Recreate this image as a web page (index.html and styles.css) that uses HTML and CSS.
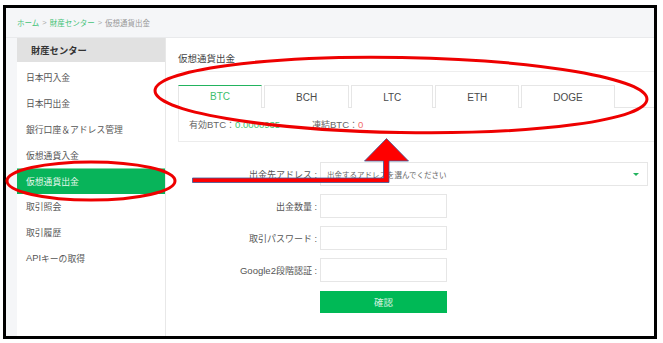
FILE: index.html
```html
<!DOCTYPE html>
<html lang="ja">
<head>
<meta charset="utf-8">
<title>仮想通貨出金</title>
<link rel="stylesheet" href="styles.css">
</head>
<body>
<div class="frame">
  <div class="crumbs">
    <a class="crumb-link">ホーム</a><span class="sep">&gt;</span><a class="crumb-link">財産センター</a><span class="sep">&gt;</span><span class="crumb-cur">仮想通貨出金</span>
  </div>
  <div class="layout">
    <div class="gutter"></div>
    <nav class="sidebar">
      <div class="side-head">財産センター</div>
      <ul class="menu">
        <li class="menu-item">日本円入金</li>
        <li class="menu-item">日本円出金</li>
        <li class="menu-item">銀行口座＆アドレス管理</li>
        <li class="menu-item">仮想通貨入金</li>
        <li class="menu-item active">仮想通貨出金</li>
        <li class="menu-item">取引照会</li>
        <li class="menu-item">取引履歴</li>
        <li class="menu-item"><span class="lat">API</span>キーの取得</li>
      </ul>
    </nav>
    <main class="main">
      <h1 class="title">仮想通貨出金</h1>
      <section class="coinbox">
        <div class="tabs">
          <div class="tab active">BTC</div>
          <div class="tab">BCH</div>
          <div class="tab">LTC</div>
          <div class="tab">ETH</div>
          <div class="tab">DOGE</div>
        </div>
        <div class="balances">
          <span class="bal bal-first">有効<span class="lat">BTC</span>：<span class="green lat">0.0000935</span></span>
          <span class="bal">凍結<span class="lat">BTC</span>：<span class="red lat">0</span></span>
        </div>
      </section>
      <form class="form">
        <label class="lbl">出金先アドレス :</label>
        <div class="select"><span class="ph">出金するアドレスを選んでください</span><span class="caret"></span></div>
        <label class="lbl">出金数量 :</label>
        <div class="input"></div>
        <label class="lbl">取引パスワード :</label>
        <div class="input"></div>
        <label class="lbl"><span class="lat">Google2</span>段階認証 :</label>
        <div class="input"></div>
        <span></span>
        <div class="btn">確認</div>
      </form>
    </main>
  </div>
</div>
<svg class="overlay" width="663" height="343" viewBox="0 0 663 343">
  <ellipse cx="401" cy="95" rx="246" ry="37.5" transform="rotate(1 401 95)" fill="none" stroke="#ee0000" stroke-width="3"/>
  <ellipse cx="91" cy="181" rx="84" ry="19" fill="none" stroke="#ee0000" stroke-width="3"/>
  <path d="M192.5 178 L383.5 178 L383.5 161 L364.5 161 L386.5 138.5 L408.5 161 L389 161 L389 182.5 L192.5 182.5 Z" fill="#ff0000" stroke="#3a5a9a" stroke-width="0.8"/>
</svg>
</body>
</html>
```
FILE: styles.css
```css
* { box-sizing: border-box; }
html, body { margin: 0; padding: 0; background: #fff; }
body {
  font-family: "Liberation Sans", "Noto Sans CJK JP", sans-serif;
  color: #555;
  position: relative;
  width: 663px;
  height: 343px;
  overflow: hidden;
}
.lat { font-size: 1.06em; }
.frame {
  margin: 5px 0 0 3px;
  width: 654px;
  height: 334px;
  border: 3px solid #000;
  background: #f5f6f8;
  overflow: hidden;
  display: flex;
  flex-direction: column;
}
.crumbs {
  height: 30px;
  flex: none;
  display: flex;
  align-items: center;
  padding: 0 0 1px 11px;
  font-size: 7.5px;
  color: #999;
  border-bottom: 1px solid #e9eaec;
}
.crumb-link { color: #45c378; }
.crumb-cur { color: #999; }
.sep { margin: 0 3px; color: #aaa; }
.layout { flex: 1; display: flex; min-height: 0; }
.gutter { width: 11px; flex: none; }
.sidebar {
  width: 149px;
  flex: none;
  background: #fff;
  border-right: 1px solid #e8e8e8;
}
.side-head {
  height: 24px;
  background: #e1e1e1;
  display: flex;
  align-items: center;
  padding-left: 14px;
  font-size: 9.3px;
  font-weight: bold;
  color: #333;
}
.menu { list-style: none; margin: 0; padding: 3px 0 0; }
.menu-item {
  height: 25.75px;
  display: flex;
  align-items: center;
  padding-left: 9px;
  font-size: 8.8px;
  color: #555;
}
.menu-item.active {
  background: #08b45a;
  color: #e6f7ec;
  border-top: 1px solid #7fd9a4;
}
.main {
  flex: 1;
  background: #fff;
  padding: 0 6px 0 12px;
  min-width: 0;
}
.title {
  margin: 0 -10px 0 0;
  padding-top: 8px;
  height: 34px;
  line-height: 25px;
  font-size: 9.5px;
  font-weight: normal;
  color: #444;
  border-bottom: 1px solid #eeeeee;
}
.coinbox {
  margin-top: 13px;
  margin-right: -16px;
  border: 1px solid #ececec;
  border-top: none;
}
.tabs {
  display: flex;
  gap: 2px;
  height: 23px;
  border-bottom: 1px solid #e6e6e6;
  margin-left: -1px;
}
.tab {
  height: 23px;
  padding: 0 31px;
  display: flex;
  align-items: center;
  justify-content: center;
  font-size: 10px;
  color: #4a4a4a;
  border: 1px solid #e6e6e6;
  border-bottom: none;
  background: #fff;
}
.tab.active {
  color: #3dbf6e;
  border-top: 1px solid #22b35e;
  margin-bottom: -1px;
  padding-bottom: 1px;
}
.balances {
  height: 33px;
  display: flex;
  align-items: center;
  padding-left: 10px;
  font-size: 9px;
  color: #666;
}
.bal-first { width: 123px; }
.green { color: #3dc46e; }
.red { color: #f26b6b; }
.form {
  margin-top: 20px;
  display: grid;
  grid-template-columns: 139px 1fr;
  column-gap: 3px;
  row-gap: 8px;
  align-items: center;
}
.lbl {
  text-align: right;
  font-size: 9px;
  color: #555;
}
.select {
  height: 24px;
  border: 1px solid #e6e6e6;
  display: flex;
  align-items: center;
  justify-content: space-between;
  padding: 0 8px 0 6px;
}
.ph { font-size: 7.5px; color: #666; }
.caret {
  width: 0;
  height: 0;
  border-left: 3px solid transparent;
  border-right: 3px solid transparent;
  border-top: 3px solid #22b35e;
}
.input {
  width: 127px;
  height: 24px;
  border: 1px solid #e6e6e6;
}
.btn {
  width: 127px;
  height: 22px;
  margin-top: 1px;
  background: #00b956;
  color: #d6f3e0;
  font-size: 9.5px;
  display: flex;
  align-items: center;
  justify-content: center;
}
.overlay {
  position: absolute;
  top: 0;
  left: 0;
  pointer-events: none;
}
```
